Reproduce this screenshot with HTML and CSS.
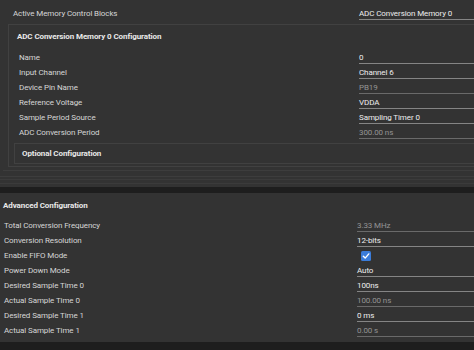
FILE: index.html
```html
<!DOCTYPE html>
<html>
<head>
<meta charset="utf-8">
<link rel="stylesheet" href="styles.css">
</head>
<body>
<div class="sec1">
  <div class="top-row">
    <span class="lbl">Active Memory Control Blocks</span>
    <span class="val">ADC Conversion Memory 0</span>
  </div>
  <div class="grp">
    <div class="card">
      <div class="card-title">ADC Conversion Memory 0 Configuration</div>
      <div class="rows rows1">
        <span class="lbl">Name</span><span class="val">0</span>
        <span class="lbl">Input Channel</span><span class="val">Channel 6</span>
        <span class="lbl">Device Pin Name</span><span class="val dim">PB19</span>
        <span class="lbl">Reference Voltage</span><span class="val">VDDA</span>
        <span class="lbl">Sample Period Source</span><span class="val">Sampling Timer 0</span>
        <span class="lbl">ADC Conversion Period</span><span class="val dim">300.00 ns</span>
      </div>
      <div class="opt">Optional Configuration</div>
    </div>
  </div>
</div>
<div class="spacer"></div>
<div class="band"></div>
<div class="sec2">
  <div class="sec-title">Advanced Configuration</div>
  <div class="rows rows2">
    <span class="lbl">Total Conversion Frequency</span><span class="val dim">3.33 MHz</span>
    <span class="lbl">Conversion Resolution</span><span class="val">12-bits</span>
    <span class="lbl">Enable FIFO Mode</span><span class="chk"><svg width="10" height="10" viewBox="0 0 10 10"><rect width="10" height="10" rx="1.5" fill="#3b7cd9"/><path d="M2.3 5.2 L4.2 7.1 L7.8 2.9" fill="none" stroke="#fff" stroke-width="1.4" stroke-linecap="round" stroke-linejoin="round"/></svg></span>
    <span class="lbl">Power Down Mode</span><span class="val">Auto</span>
    <span class="lbl">Desired Sample Time 0</span><span class="val">100ns</span>
    <span class="lbl">Actual Sample Time 0</span><span class="val dim">100.00 ns</span>
    <span class="lbl">Desired Sample Time 1</span><span class="val">0 ms</span>
    <span class="lbl">Actual Sample Time 1</span><span class="val dim">0.00 s</span>
  </div>
</div>
<div class="band bottom"></div>
</body>
</html>
```

FILE: styles.css
```css
* { box-sizing: border-box; }
html, body { margin: 0; padding: 0; }
body {
  width: 474px;
  height: 350px;
  overflow: hidden;
  background: #333333;
  font-family: Roboto, "Liberation Sans", sans-serif;
  font-size: 8px;
  letter-spacing: -0.1px;
  color: #d6d6d6;
}
.lbl { line-height: 15px; white-space: nowrap; }
.val {
  display: block;
  margin-top: 2px;
  height: 12px;
  line-height: 11px;
  border-bottom: 1px solid #858585;
  color: #eeeeee;
  white-space: nowrap;
}
.val.dim { color: #939393; border-bottom-color: #6a6a6a; }

.sec1 { padding: 6px 0 5px 3px; border-bottom: 1px solid #3d3d3d; }
.top-row {
  display: grid;
  grid-template-columns: 346px 1fr;
  height: 15px;
  padding-left: 10px;
}
.grp { padding-bottom: 3px; border-bottom: 1px solid #3d3d3d; }
.card {
  margin: 3px 0 0 5px;
  border: 1px solid #414141;
  border-right: none;
  padding: 5px 0 2px 5px;
}
.card-title {
  padding-left: 3px;
  line-height: 14px;
  font-weight: bold;
  color: #e8e8e8;
}
.rows {
  display: grid;
  grid-auto-rows: 15px;
}
.rows1 {
  margin-top: 6px;
  padding-left: 5px;
  grid-template-columns: 340px 1fr;
}
.opt {
  margin-top: 3px;
  height: 21px;
  border: 1px solid #414141;
  border-right: none;
  padding-left: 7px;
  line-height: 19px;
  font-weight: bold;
  color: #e8e8e8;
}
.spacer {
  margin: 2px 0 3px;
  height: 5px;
  border-top: 1px solid #3b3b3b;
  border-bottom: 1px solid #3b3b3b;
}
.band { height: 6px; background: #1e1e1e; }
.band.bottom { height: 8px; }
.sec2 { padding: 6px 0 4px 3px; }
.sec-title {
  line-height: 14px;
  font-weight: bold;
  color: #e8e8e8;
}
.rows2 {
  margin-top: 5px;
  padding-left: 1px;
  grid-template-columns: 353px 1fr;
}
.chk { display: block; padding: 3px 0 0 4px; line-height: 0; }
```
